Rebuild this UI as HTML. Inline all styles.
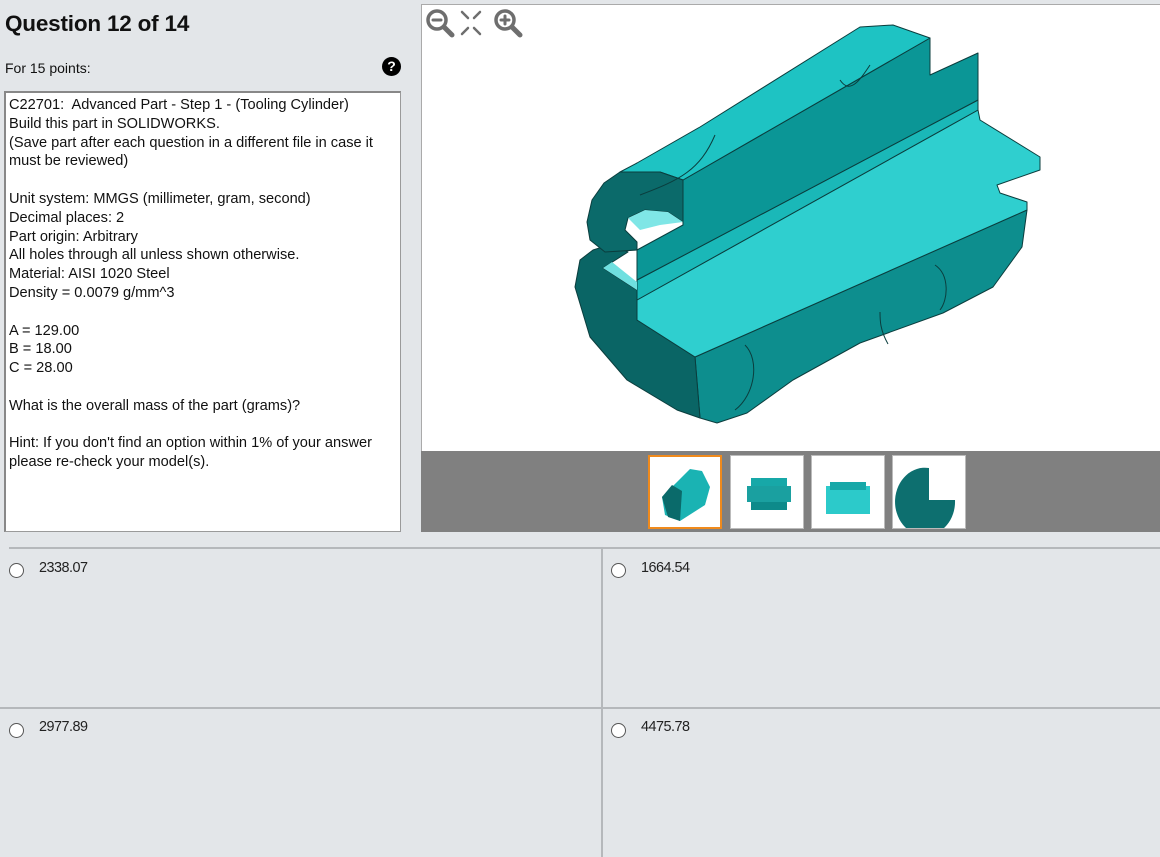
<!DOCTYPE html>
<html><head><meta charset="utf-8"><style>
*{margin:0;padding:0;box-sizing:border-box}
body{width:1160px;height:857px;background:#e3e6e9;font-family:"Liberation Sans",sans-serif;color:#111;position:relative;overflow:hidden}
.abs{position:absolute}
h1{position:absolute;left:5px;top:11px;font-size:22.5px;font-weight:bold;letter-spacing:-0.2px}
.pts{left:5px;top:60px;font-size:14px}
.help{left:382px;top:57px;width:19px;height:19px;border-radius:50%;background:#000;color:#fff;font-weight:bold;font-size:14px;text-align:center;line-height:19px}
.box{left:4px;top:91px;width:397px;height:441px;background:#fff;border:1px solid #9a9a9a;border-top:2px solid #888;border-left:2px solid #888;padding:3px 0 0 3px;font-size:14.6px;line-height:18.8px;letter-spacing:0px;white-space:nowrap}
.viewer{left:421px;top:4px;width:739px;height:448px;background:#fff;border:1px solid #aaa;border-right:none}
.bar{left:421px;top:451px;width:739px;height:81px;background:#808080}
.th{position:absolute;top:455px;width:74px;height:74px;background:#fff;border:1px solid #bbb}
.grid{left:9px;top:547px;width:1151px;height:2px;background:#b5b8bb}
.vl{left:601px;top:549px;width:2px;height:308px;background:#b5b8bb}
.hl{left:0;top:707px;width:1160px;height:2px;background:#b5b8bb}
.rad{position:absolute;width:15px;height:15px;border:1.5px solid #555;border-radius:50%;background:#fff}
.ans{position:absolute;font-size:14.4px;letter-spacing:-0.5px;color:#222}
</style></head><body>
<h1>Question 12 of 14</h1>
<div class="abs pts">For 15 points:</div>
<div class="abs help">?</div>
<div class="abs box">C22701:&nbsp; Advanced Part - Step 1 - (Tooling Cylinder)<br>Build this part in SOLIDWORKS.<br>(Save part after each question in a different file in case it<br>must be reviewed)<br><br>Unit system: MMGS (millimeter, gram, second)<br>Decimal places: 2<br>Part origin: Arbitrary<br>All holes through all unless shown otherwise.<br>Material: AISI 1020 Steel<br>Density = 0.0079 g/mm^3<br><br>A = 129.00<br>B = 18.00<br>C = 28.00<br><br>What is the overall mass of the part (grams)?<br><br>Hint: If you don't find an option within 1% of your answer<br>please re-check your model(s).</div>
<div class="abs viewer"></div>
<svg class="abs" style="left:0;top:0" width="1160" height="452">
<g fill="none" stroke="#6e6e6e" stroke-width="3.5" stroke-linecap="round">
<circle cx="437" cy="20" r="9"/><line x1="444" y1="27" x2="452" y2="35" stroke-width="5"/><line x1="433" y1="20" x2="441" y2="20" stroke-width="3"/>
<circle cx="505" cy="20" r="9"/><line x1="512" y1="27" x2="520" y2="35" stroke-width="5"/><line x1="501" y1="20" x2="509" y2="20" stroke-width="3"/><line x1="505" y1="16" x2="505" y2="24" stroke-width="3"/>
<g stroke-width="2.5"><path d="M462 12l6 6M474 18l6-6M462 34l6-6M474 28l6 6"/></g>
</g>
<g stroke="#0b3d3d" stroke-width="1" stroke-linejoin="round">
<path fill="#0d8e8e" d="M695 357L1027 210L1022 247L993 287L943 313L860 343L793 380L747 413L717 423L700 418Z"/>
<path fill="#0a6565" d="M593 250L612 244L628 252L603 268L637 290L637 320L695 357L700 418L677 410L627 380L590 337L575 287L580 260Z"/>
<path fill="#2fcfcf" d="M637 300L978 110L980 120L1040 157L1040 170L997 185L1000 193L1027 202L1027 210L695 357L637 320Z"/>
<path fill="#1ab8b8" d="M637 280L978 100L978 110L637 300Z"/>
<path fill="#0b9696" d="M683 180L930 38L930 75L978 53L978 100L637 280L637 250L683 225Z"/>
<path fill="#1ec3c3" d="M620 172L637 163L700 127L860 27L893 25L930 38L683 180L660 172Z"/>
<path fill="#0b6a6a" d="M683 180L683 222L668 212L645 210L628 218L625 230L637 242L637 250L605 252L590 240L587 222L592 200L604 183L620 172L660 172Z"/>
<path fill="#7fe6e6" d="M628 218L645 210L668 212L683 222L660 225L640 230Z" stroke="none"/>
<path fill="#6fe0e0" d="M603 268L612 262L637 282L637 290Z" stroke="none"/>
<path fill="none" d="M745 345C760 360 755 395 735 410M935 265C950 275 948 300 940 310M640 195C680 180 700 170 715 135M840 80C850 95 860 80 870 65M888 344C880 330 880 320 880 312"/>
</g>
</svg>
<div class="abs bar"></div>
<div class="th" style="left:648px;border:2px solid #f08a1c"><svg width="70" height="70"><path d="M12 40L40 12L52 14L60 30L55 48L30 64L15 58Z" fill="#1ab3b3"/><path d="M12 40L22 28L32 34L30 64L18 60Z" fill="#0a6a6a"/></svg></div>
<div class="th" style="left:730px"><svg width="72" height="72"><rect x="20" y="22" width="36" height="10" fill="#17a8a8"/><rect x="16" y="30" width="44" height="16" fill="#1aa0a0"/><rect x="20" y="46" width="36" height="8" fill="#0d8a8a"/></svg></div>
<div class="th" style="left:811px"><svg width="72" height="72"><rect x="14" y="30" width="44" height="28" fill="#2ccaca"/><rect x="18" y="26" width="36" height="8" fill="#17a8a8"/></svg></div>
<div class="th" style="left:892px"><svg width="72" height="72"><path d="M36 12A30 34 0 1 0 62 44L36 44Z" fill="#0d6f6f"/></svg></div>
<div class="abs grid"></div><div class="abs vl"></div><div class="abs hl"></div>
<div class="rad" style="left:9px;top:563px"></div><div class="ans" style="left:39px;top:560px">2338.07</div>
<div class="rad" style="left:611px;top:563px"></div><div class="ans" style="left:641px;top:560px">1664.54</div>
<div class="rad" style="left:9px;top:723px"></div><div class="ans" style="left:39px;top:719px">2977.89</div>
<div class="rad" style="left:611px;top:723px"></div><div class="ans" style="left:641px;top:719px">4475.78</div>
</body></html>
